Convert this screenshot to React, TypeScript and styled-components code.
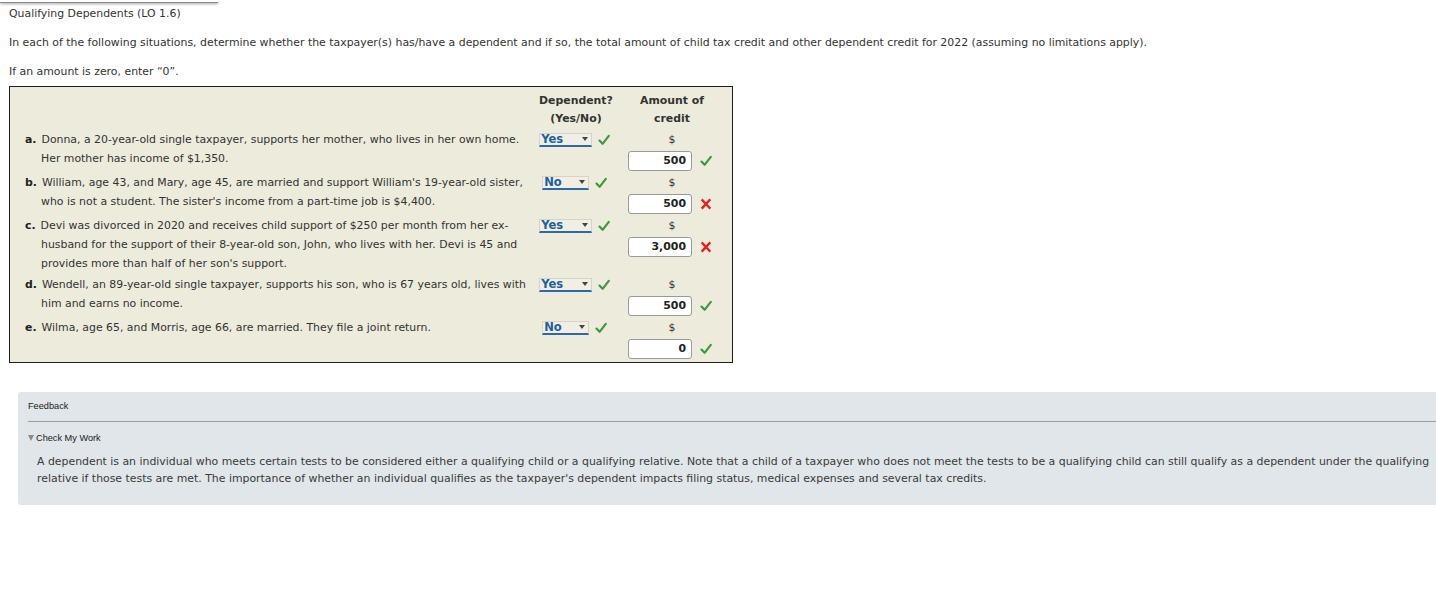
import React from 'react'
import styled, { createGlobalStyle } from 'styled-components'

const GlobalStyle = createGlobalStyle`
  html, body {
    margin: 0;
    padding: 0;
    background: #ffffff;
  }
  body {
    font-family: Verdana, "DejaVu Sans", sans-serif;
    font-size: 10.9px;
    color: #333333;
  }
`

interface Situation {
  letter: string
  lines: string[]
  dependent: string
  selectWidth: number
  amount: string
  amountCorrect: boolean
}

const situations: Situation[] = [
  {
    letter: 'a.',
    lines: [
      'Donna, a 20-year-old single taxpayer, supports her mother, who lives in her own home.',
      'Her mother has income of $1,350.',
    ],
    dependent: 'Yes',
    selectWidth: 53,
    amount: '500',
    amountCorrect: true,
  },
  {
    letter: 'b.',
    lines: [
      "William, age 43, and Mary, age 45, are married and support William's 19-year-old sister,",
      "who is not a student. The sister's income from a part-time job is $4,400.",
    ],
    dependent: 'No',
    selectWidth: 47,
    amount: '500',
    amountCorrect: false,
  },
  {
    letter: 'c.',
    lines: [
      'Devi was divorced in 2020 and receives child support of $250 per month from her ex-',
      'husband for the support of their 8-year-old son, John, who lives with her. Devi is 45 and',
      "provides more than half of her son's support.",
    ],
    dependent: 'Yes',
    selectWidth: 53,
    amount: '3,000',
    amountCorrect: false,
  },
  {
    letter: 'd.',
    lines: [
      'Wendell, an 89-year-old single taxpayer, supports his son, who is 67 years old, lives with',
      'him and earns no income.',
    ],
    dependent: 'Yes',
    selectWidth: 53,
    amount: '500',
    amountCorrect: true,
  },
  {
    letter: 'e.',
    lines: ['Wilma, age 65, and Morris, age 66, are married. They file a joint return.'],
    dependent: 'No',
    selectWidth: 47,
    amount: '0',
    amountCorrect: true,
  },
]

const TopTab = styled.div`
  width: 218px;
  height: 2px;
  border-bottom: 1px solid #8a8a8a;
  box-shadow: 0 1px 3px rgba(0, 0, 0, 0.35);
`

const Page = styled.div`
  padding-left: 9px;
`

const Text = styled.p`
  margin: 0;
  line-height: 18px;
`

const Title = styled(Text)`
  margin-top: 2px;
`

const Instruction = styled(Text)`
  margin-top: 11px;
`

const Panel = styled.div`
  margin-top: 5px;
  width: 722px;
  border: 1px solid #1e1e1e;
  background: #edebdc;
  padding: 4px 0 2px;
`

const Row = styled.div`
  display: grid;
  grid-template-columns: 520px 92px 100px;
  padding: 1px 0;
`

const HeadCell = styled.div`
  text-align: center;
  font-weight: bold;
  line-height: 18px;
  color: #333;
`

const Description = styled.div`
  padding-left: 15px;
  line-height: 19px;
  white-space: nowrap;
`

const Letter = styled.b`
  color: #222;
  margin-right: 5px;
`

const Indent = styled.div`
  padding-left: 16px;
`

const DependentCell = styled.div`
  display: flex;
  justify-content: center;
  align-items: center;
  gap: 5.5px;
  height: 19px;
  margin-right: 3px;
`

const Select = styled.div<{ $width: number }>`
  position: relative;
  box-sizing: border-box;
  width: ${(p) => p.$width}px;
  height: 14px;
  border: 1px solid #d6d4c8;
  border-bottom: 2px solid #2d6aa5;
  background: #f1efe4;
  color: #1c5fa3;
  font-weight: bold;
  font-size: 11.5px;
  line-height: 11px;
  padding-left: 1px;
`

const Caret = styled.span`
  position: absolute;
  right: 3px;
  top: 3px;
  width: 0;
  height: 0;
  border-left: 3px solid transparent;
  border-right: 3px solid transparent;
  border-top: 4px solid #444;
`

const AmountCell = styled.div`
  display: flex;
  flex-direction: column;
  align-items: center;
  padding-bottom: 0.5px;
`

const Dollar = styled.div`
  line-height: 19px;
  color: #333;
`

const InputLine = styled.div`
  display: flex;
  align-items: center;
  gap: 7.5px;
  margin-top: 1.5px;
  margin-right: 4.5px;
`

const Amount = styled.div`
  box-sizing: border-box;
  width: 64px;
  height: 20px;
  border: 1px solid #9a9a9a;
  border-radius: 3px;
  background: #fff;
  text-align: right;
  font-weight: bold;
  color: #222;
  line-height: 18px;
  padding-right: 5px;
`

const Mark = styled.svg`
  width: 12px;
  height: 12px;
  flex: none;
`

const Feedback = styled.div`
  margin-top: 29px;
  margin-left: 9px;
  background: #e0e6e9;
  border-radius: 3px 0 0 3px;
  padding: 8px 0 18px 10px;
`

const FeedbackLabel = styled.div`
  font-family: Tahoma, "Liberation Sans", Arial, sans-serif;
  font-size: 9.2px;
  line-height: 12px;
  color: #1a1a1a;
`

const Rule = styled.hr`
  margin: 9px 0 0;
  border: 0;
  border-top: 1px solid #9a9c9e;
`

const CheckHeader = styled.div`
  display: flex;
  align-items: center;
  gap: 2px;
  margin-top: 10px;
  font-family: Tahoma, "Liberation Sans", Arial, sans-serif;
  font-size: 9.2px;
  line-height: 12px;
  color: #1a1a1a;
`

const Triangle = styled.span`
  width: 0;
  height: 0;
  border-left: 3.5px solid transparent;
  border-right: 3.5px solid transparent;
  border-top: 6px solid #8a8a8a;
`

const FeedbackBody = styled.div`
  margin: 9px 0 0 9px;
  line-height: 17px;
  color: #3a3a3a;
  white-space: nowrap;
`

function Check() {
  return (
    <Mark viewBox="0 0 12 12">
      <path d="M1.5 6.6 L4.6 9.8 L10.8 1.8" fill="none" stroke="#3c9a3c" strokeWidth="2.2" strokeLinecap="round" strokeLinejoin="round" />
    </Mark>
  )
}

function Cross() {
  return (
    <Mark viewBox="0 0 12 12">
      <path d="M2.5 2.2 L9.5 9.8 M9.5 2.2 L2.5 9.8" fill="none" stroke="#e8201c" strokeWidth="2.4" strokeLinecap="square" />
    </Mark>
  )
}

export default function App() {
  return (
    <>
      <GlobalStyle />
      <TopTab />
      <Page>
        <Title>Qualifying Dependents (LO 1.6)</Title>
        <Instruction>
          In each of the following situations, determine whether the taxpayer(s) has/have a dependent and if so, the total amount of child tax credit and other dependent credit for 2022 (assuming no limitations apply).
        </Instruction>
        <Instruction>If an amount is zero, enter “0”.</Instruction>

        <Panel>
          <Row>
            <div />
            <HeadCell>
              Dependent?
              <br />
              (Yes/No)
            </HeadCell>
            <HeadCell>
              Amount of
              <br />
              credit
            </HeadCell>
          </Row>
          {situations.map((s) => (
            <Row key={s.letter}>
              <Description>
                <div>
                  <Letter>{s.letter}</Letter>
                  {s.lines[0]}
                </div>
                {s.lines.slice(1).map((line) => (
                  <Indent key={line}>{line}</Indent>
                ))}
              </Description>
              <DependentCell>
                <Select $width={s.selectWidth}>
                  {s.dependent}
                  <Caret />
                </Select>
                <Check />
              </DependentCell>
              <AmountCell>
                <Dollar>$</Dollar>
                <InputLine>
                  <Amount>{s.amount}</Amount>
                  {s.amountCorrect ? <Check /> : <Cross />}
                </InputLine>
              </AmountCell>
            </Row>
          ))}
        </Panel>

        <Feedback>
          <FeedbackLabel>Feedback</FeedbackLabel>
          <Rule />
          <CheckHeader>
            <Triangle />
            Check My Work
          </CheckHeader>
          <FeedbackBody>
            <div>
              A dependent is an individual who meets certain tests to be considered either a qualifying child or a qualifying relative. Note that a child of a taxpayer who does not meet the tests to be a qualifying child can still qualify as a dependent under the qualifying
            </div>
            <div>
              relative if those tests are met. The importance of whether an individual qualifies as the taxpayer's dependent impacts filing status, medical expenses and several tax credits.
            </div>
          </FeedbackBody>
        </Feedback>
      </Page>
    </>
  )
}
